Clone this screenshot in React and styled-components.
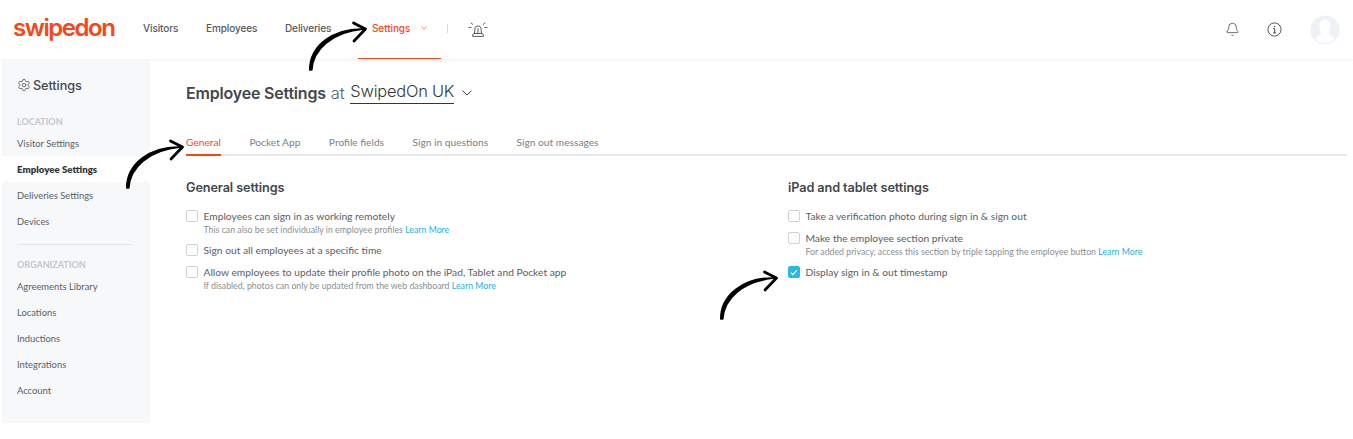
import React from "react";
import styled, { createGlobalStyle } from "styled-components";
import { Bell, ChevronDown, Settings as Gear } from "lucide-react";

const GlobalStyle = createGlobalStyle`
  html, body { margin: 0; padding: 0; background: #fff; }
  body { font-family: "Lato", "Open Sans", sans-serif; color: #4a4f55; }
  * { box-sizing: border-box; }
`;

const Page = styled.div`
  position: relative;
  width: 1353px;
  height: 439px;
  overflow: hidden;
  background: #fff;
`;

const Header = styled.header`
  display: flex;
  align-items: center;
  height: 59px;
  padding: 0 13px;
  box-shadow: 0 1px 3px rgba(30, 40, 60, 0.07);
`;

const Logo = styled.div`
  width: 102px;
  margin-right: 28px;
  margin-top: -3px;
  font-family: "Inter", sans-serif;
  font-size: 24px;
  font-weight: 600;
  letter-spacing: -1.45px;
  color: #fa4616;
  line-height: 1;
`;

const Nav = styled.nav`
  display: flex;
  align-items: stretch;
  height: 100%;
`;

const NavItem = styled.a`
  display: flex;
  align-items: center;
  gap: 9px;
  width: ${(p) => p.$width}px;
  padding: 0 0 2px ${(p) => (p.$active ? 14 : 0)}px;
  font-family: "Inter", sans-serif;
  font-size: 10px;
  font-weight: 500;
  letter-spacing: -0.1px;
  color: ${(p) => (p.$active ? "#fa4616" : "#55595f")};
  border-bottom: 1px solid ${(p) => (p.$active ? "#fa4616" : "transparent")};
`;

const NavSep = styled.span`
  align-self: center;
  width: 1px;
  height: 9px;
  margin: 0 20px 2px 6px;
  background: #d4d7dc;
`;

const AlarmButton = styled.span`
  display: flex;
  align-self: center;
  margin-bottom: 2px;
`;

const HeaderRight = styled.div`
  display: flex;
  align-items: center;
  margin-left: auto;
  gap: 27px;
  color: #3f4349;
`;

const Avatar = styled.span`
  display: flex;
  margin-left: 1px;
`;

const Body = styled.div`
  display: flex;
  height: 380px;
`;

const Sidebar = styled.aside`
  flex: none;
  width: 148px;
  height: 364px;
  margin-left: 2px;
  padding-top: 17px;
  background: #f7f8fa;
`;

const SideTitle = styled.div`
  display: flex;
  align-items: center;
  gap: 2px;
  height: 18px;
  padding-left: 15px;
  margin-bottom: 22px;
  font-family: "Inter", sans-serif;
  font-size: 12.7px;
  font-weight: 500;
  letter-spacing: -0.1px;
  color: #43474d;
`;

const SideLabel = styled.div`
  height: 12px;
  line-height: 12px;
  padding-left: 15px;
  margin-bottom: 2px;
  font-size: 9px;
  font-weight: 700;
  color: #c3c7cd;
`;

const SideItem = styled.a`
  display: flex;
  align-items: center;
  height: 26px;
  padding-left: 15px;
  font-size: ${(p) => (p.$active ? 9.7 : 9.4)}px;
  font-weight: ${(p) => (p.$active ? 800 : 400)};
  color: ${(p) => (p.$active ? "#33373c" : "#5b6066")};
  background: ${(p) => (p.$active ? "#fff" : "transparent")};
`;

const SideDivider = styled.div`
  width: 115px;
  height: 1px;
  margin: 10px 0 14px 15px;
  background: #e2e4e8;
`;

const Main = styled.main`
  flex: 1;
  padding: 21px 6px 0 36px;
`;

const Title = styled.div`
  display: flex;
  align-items: center;
  height: 25px;
  font-family: "Inter", sans-serif;
  font-size: 16px;
  font-weight: 600;
  letter-spacing: -0.2px;
  color: #43474d;
`;

const TitleAt = styled.span`
  margin-left: 5px;
  font-size: 16.4px;
  font-weight: 300;
  color: #5a5f65;
`;

const TitleOrg = styled.span`
  margin-left: 6px;
  margin-right: 5px;
  padding-bottom: 2px;
  font-size: 16.4px;
  font-weight: 300;
  color: #33373c;
  border-bottom: 1px solid #33373c;
`;

const Tabs = styled.div`
  display: flex;
  gap: 28.5px;
  height: 26px;
  margin-top: 25px;
  border-bottom: 2px solid #e6e8ec;
`;

const Tab = styled.a`
  height: 26px;
  padding-top: 6px;
  font-size: 10.2px;
  color: ${(p) => (p.$active ? "#fa4616" : "#7b8087")};
  border-bottom: 2px solid ${(p) => (p.$active ? "#fa4616" : "transparent")};
`;

const Columns = styled.div`
  display: grid;
  grid-template-columns: 602px 1fr;
  margin-top: 23px;
`;

const Heading = styled.h2`
  margin: 0 0 12px;
  height: 18px;
  line-height: 18px;
  font-family: "Inter", sans-serif;
  font-size: 12.7px;
  font-weight: 600;
  letter-spacing: -0.1px;
  color: #43474d;
`;

const Option = styled.div`
  display: flex;
  gap: 5.5px;
  margin-bottom: 8.3px;
`;

const Box = styled.span`
  flex: none;
  display: flex;
  align-items: center;
  justify-content: center;
  width: 12px;
  height: 12px;
  margin-top: 1px;
  border-radius: 2px;
  border: 1px solid ${(p) => (p.$checked ? "#27b9e4" : "#cfd2d8")};
  background: ${(p) => (p.$checked ? "#27b9e4" : "#fff")};
`;

const OptionText = styled.div`
  font-size: 10.25px;
  line-height: 14px;
  color: #5b6066;
`;

const Hint = styled.div`
  margin: 1px 0 -1.3px;
  font-size: 8.77px;
  line-height: 12px;
  color: #8a8f95;
`;

const LearnMore = styled.a`
  color: #27b0dc;
`;

const ArrowSvg = styled.svg`
  position: absolute;
  left: ${(p) => p.$x}px;
  top: ${(p) => p.$y}px;
  width: 60px;
  height: 52px;
  overflow: visible;
`;

const Arrow = ({ x, y }) => (
  <ArrowSvg $x={x} $y={y} viewBox="0 0 60 52" fill="none">
    <path d="M2.8 50 C4 30 22 12 55 9 C24 8 0.5 26 0.8 50 Z" fill="#000" stroke="#000" strokeWidth="1.6" strokeLinejoin="round" />
    <path d="M44.5 3 L56.5 9 L45 21" stroke="#000" strokeWidth="2.8" strokeLinecap="round" strokeLinejoin="round" />
  </ArrowSvg>
);

const AlarmIcon = () => (
  <svg width="20" height="18" viewBox="0 0 20 18" fill="none" stroke="#4a4f55" strokeWidth="0.9" strokeLinecap="round">
    <path d="M6.5 13.5 L7 8 Q7.2 6 10 6 Q12.8 6 13 8 L13.5 13.5" />
    <path d="M10 8.5 V13.5" />
    <path d="M4.5 16 Q4.5 13.5 6 13.5 H14 Q15.5 13.5 15.5 16 Z" />
    <path d="M1 7.5 H3 M3 3 L4.8 4.4 M17 3 L15.2 4.4 M17 7.5 H19" />
  </svg>
);

const InfoIcon = () => (
  <svg width="15" height="15" viewBox="0 0 15 15" fill="none" stroke="#3f4349">
    <circle cx="7.5" cy="7.5" r="6.6" strokeWidth="0.9" />
    <circle cx="7.5" cy="4.4" r="0.7" fill="#3f4349" stroke="none" />
    <path d="M6.2 6.5 H7.7 V10.8 M6.2 10.9 H9" strokeWidth="1" />
  </svg>
);

const AvatarIcon = () => (
  <svg width="30" height="30" viewBox="0 0 30 30">
    <circle cx="15" cy="15" r="14.5" fill="#eef2f7" />
    <clipPath id="avatar-clip">
      <circle cx="15" cy="15" r="13" />
    </clipPath>
    <g clipPath="url(#avatar-clip)" fill="#fff">
      <ellipse cx="15" cy="11.5" rx="5.6" ry="7" />
      <path d="M11.5 17 L18.5 17 L19.5 20 Q25 21.5 27 30 H3 Q5 21.5 10.5 20 Z" />
    </g>
  </svg>
);

const Check = () => (
  <svg width="8" height="7" viewBox="0 0 8 7" fill="none" stroke="#fff" strokeWidth="1.1">
    <path d="M1 3.6 L3 5.6 L7 1" />
  </svg>
);

const locationLinks = ["Visitor Settings", "Employee Settings", "Deliveries Settings", "Devices"];
const organizationLinks = ["Agreements Library", "Locations", "Inductions", "Integrations", "Account"];
const tabs = ["General", "Pocket App", "Profile fields", "Sign in questions", "Sign out messages"];

const OptionRow = ({ label, hint, checked }) => (
  <Option>
    <Box $checked={checked}>{checked && <Check />}</Box>
    <OptionText>
      {label}
      {hint && (
        <Hint>
          {hint} <LearnMore>Learn More</LearnMore>
        </Hint>
      )}
    </OptionText>
  </Option>
);

export default function App() {
  return (
    <Page>
      <GlobalStyle />
      <Header>
        <Logo>swipedon</Logo>
        <Nav>
          <NavItem $width={63}>Visitors</NavItem>
          <NavItem $width={79}>Employees</NavItem>
          <NavItem $width={73}>Deliveries</NavItem>
          <NavItem $active $width={83}>
            Settings
            <ChevronDown size={10} strokeWidth={1.6} />
          </NavItem>
          <NavSep />
          <AlarmButton>
            <AlarmIcon />
          </AlarmButton>
        </Nav>
        <HeaderRight>
          <Bell size={15} strokeWidth={1.2} />
          <InfoIcon />
          <Avatar>
            <AvatarIcon />
          </Avatar>
        </HeaderRight>
      </Header>
      <Body>
        <Sidebar>
          <SideTitle>
            <Gear size={14} strokeWidth={1.3} />
            Settings
          </SideTitle>
          <SideLabel>LOCATION</SideLabel>
          {locationLinks.map((l) => (
            <SideItem key={l} $active={l === "Employee Settings"}>
              {l}
            </SideItem>
          ))}
          <SideDivider />
          <SideLabel>ORGANIZATION</SideLabel>
          {organizationLinks.map((l) => (
            <SideItem key={l}>{l}</SideItem>
          ))}
        </Sidebar>
        <Main>
          <Title>
            Employee Settings
            <TitleAt>at</TitleAt>
            <TitleOrg>SwipedOn UK</TitleOrg>
            <ChevronDown size={16} strokeWidth={1.5} />
          </Title>
          <Tabs>
            {tabs.map((t) => (
              <Tab key={t} $active={t === "General"}>
                {t}
              </Tab>
            ))}
          </Tabs>
          <Columns>
            <div>
              <Heading>General settings</Heading>
              <OptionRow
                label="Employees can sign in as working remotely"
                hint="This can also be set individually in employee profiles"
              />
              <OptionRow label="Sign out all employees at a specific time" />
              <OptionRow
                label="Allow employees to update their profile photo on the iPad, Tablet and Pocket app"
                hint="If disabled, photos can only be updated from the web dashboard"
              />
            </div>
            <div>
              <Heading>iPad and tablet settings</Heading>
              <OptionRow label="Take a verification photo during sign in & sign out" />
              <OptionRow
                label="Make the employee section private"
                hint="For added privacy, access this section by triple tapping the employee button"
              />
              <OptionRow label="Display sign in & out timestamp" checked />
            </div>
          </Columns>
        </Main>
      </Body>
      <Arrow x={309} y={20} />
      <Arrow x={126} y={138} />
      <Arrow x={720} y={269} />
    </Page>
  );
}
